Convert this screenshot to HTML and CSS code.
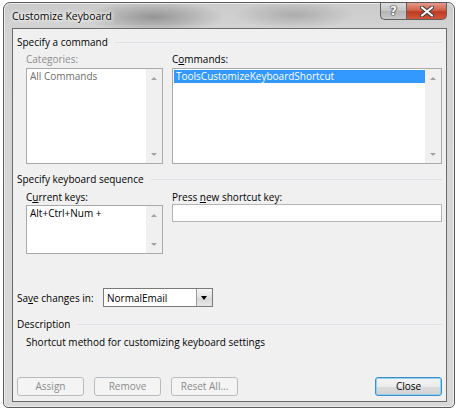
FILE: index.html
```html
<!DOCTYPE html>
<html>
<head>
<meta charset="utf-8">
<link rel="stylesheet" href="styles.css">
</head>
<body>
<div class="window">
  <div class="titlebar">
    <span class="title">Customize Keyboard</span>
    <div class="caption help"><span>?</span></div>
    <div class="caption close">
      <svg width="14" height="11" viewBox="0 0 14 11"><path d="M2 1.5 L12 9.5 M12 1.5 L2 9.5" stroke="#3a3a3a" stroke-width="4" stroke-linecap="round"/><path d="M2 1.5 L12 9.5 M12 1.5 L2 9.5" stroke="#fff" stroke-width="2.2" stroke-linecap="round"/></svg>
    </div>
  </div>
  <div class="client">
    <div class="group g1"><span>Specify a command</span><i></i></div>
    <div class="cols">
      <div class="col left">
        <div class="label disabled">Categories:</div>
        <div class="listbox tall">
          <div class="items"><div class="item dim">All Commands</div></div>
          <div class="sb"><b class="up"></b><b class="down"></b></div>
        </div>
      </div>
      <div class="col right">
        <div class="label">C<u>o</u>mmands:</div>
        <div class="listbox tall">
          <div class="items"><div class="item sel">ToolsCustomizeKeyboardShortcut</div></div>
          <div class="sb"><b class="up"></b><b class="down"></b></div>
        </div>
      </div>
    </div>
    <div class="group g2"><span>Specify keyboard sequence</span><i></i></div>
    <div class="cols">
      <div class="col left">
        <div class="label lab2">C<u>u</u>rrent keys:</div>
        <div class="listbox short">
          <div class="items"><div class="item">Alt+Ctrl+Num +</div></div>
          <div class="sb"><b class="up"></b><b class="down"></b></div>
        </div>
      </div>
      <div class="col right">
        <div class="label lab2">Press <u>n</u>ew shortcut key:</div>
        <div class="input"></div>
      </div>
    </div>
    <div class="saverow">
      <span class="savelabel">Sa<u>v</u>e changes in:</span>
      <div class="combo"><span>NormalEmail</span><div class="drop"><b></b></div></div>
    </div>
    <div class="group g3"><span>Description</span><i></i></div>
    <div class="desc">Shortcut method for customizing keyboard settings</div>
    <div class="buttons">
      <div class="btn off">Assign</div>
      <div class="btn off">Remove</div>
      <div class="btn off">Reset All...</div>
      <div class="spacer"></div>
      <div class="btn def">Close</div>
    </div>
  </div>
</div>
</body>
</html>
```
FILE: styles.css
```css
* { box-sizing: border-box; }
html, body { margin: 0; padding: 0; background: #ffffff; }
body { font-family: "Open Sans", "Noto Sans", sans-serif; font-size: 10px; font-weight: 500; color: #000; width: 458px; height: 414px; overflow: hidden; }

.window {
  margin: 2px 0 0 3px;
  width: 452px;
  height: 406px;
  border: 1px solid #5c5c5c;
  border-radius: 7px 7px 5px 5px;
  padding: 0 7px 5px 8px;
  background:
    radial-gradient(ellipse 70px 16px at 150px 14px, rgba(110,110,110,0.6), rgba(110,110,110,0) 100%),
    radial-gradient(ellipse 60px 14px at 290px 12px, rgba(130,130,130,0.45), rgba(130,130,130,0) 100%),
    linear-gradient(#cbcbcb, #d4d4d4 30px, #d9d9d9);
  box-shadow: inset 0 0 0 1px #ececec;
  display: flex;
  flex-direction: column;
}

.titlebar { height: 25px; display: flex; align-items: flex-start; }
.title {
  margin-right: auto;
  margin-top: 5px;
  font-size: 10.4px;
  color: #000;
  text-shadow: 0 0 6px #fff, 0 0 4px #fff, 0 0 2px #fff;
  line-height: 16px;
}
.caption {
  height: 17px;
  display: flex;
  align-items: center;
  justify-content: center;
  border: 1px solid #5f5f5f;
  border-top: none;
}
.help {
  width: 26px;
  border-radius: 0 0 0 5px;
  border-right: none;
  background: linear-gradient(#dcdcdc, #c4c4c4 50%, #b4b4b4 51%, #c8c8c8);
}
.help span {
  font-family: "DejaVu Sans", sans-serif;
  font-weight: bold;
  font-size: 12px;
  color: #fff;
  line-height: 12px;
  text-shadow: 0 0 1px #333, 0 0 1px #333, 0 0 2px #333;
}
.close {
  width: 41px;
  border-radius: 0 0 5px 0;
  background: linear-gradient(#e49a8b, #d1624c 45%, #bf3b21 55%, #d0573d);
}

.client {
  width: 435px;
  height: 374px;
  border: 1px solid #6b6b6b;
  background: #f0f0f0;
  padding: 0 4px 0 4px;
  display: flex;
  flex-direction: column;
}

.group { display: flex; align-items: center; height: 14px; line-height: 14px; color: #000; }
.group span { white-space: nowrap; }
.group i { flex: 1; height: 1px; background: #dbe1e6; margin-left: 7px; }
.g1 { margin-top: 6px; }
.g2 { margin-top: 8px; }
.g3 { margin-top: 10px; }

.cols { display: flex; padding-left: 9px; gap: 9px; }
.col { display: flex; flex-direction: column; }
.col.left { width: 137px; }
.col.right { width: 270px; }
.label { height: 14px; line-height: 14px; margin-top: 3px; margin-bottom: 2px; white-space: nowrap; }
.label.disabled { color: #8d8d8d; }
.label.lab2 { margin-top: 4px; margin-bottom: 0; }

.listbox { border: 1px solid #a9a9a9; background: #fff; display: flex; }
.listbox.tall { height: 96px; }
.listbox.short { height: 49px; margin-top: 1px; }
.items { flex: 1; padding: 1px 0 0 1px; }
.item { height: 13px; line-height: 13px; padding-left: 2px; white-space: nowrap; }
.item.dim { color: #6d6d6d; }
.item.sel { background: #3399ff; color: #fff; }
.sb { width: 16px; background: #f0f0f0; position: relative; }
.sb b { position: absolute; left: 5px; width: 0; height: 0; border-left: 3px solid transparent; border-right: 3px solid transparent; }
.sb .up { top: 8px; border-bottom: 3px solid #a3a3a3; }
.sb .down { bottom: 7px; border-top: 3px solid #a3a3a3; }

.input { height: 18px; border: 1px solid #b5b5b5; background: #fff; }

.saverow { display: flex; align-items: center; margin-top: 34px; height: 19px; }
.savelabel { width: 86px; white-space: nowrap; }
.combo { width: 110px; height: 19px; border: 1px solid #7a7a7a; background: #fff; display: flex; align-items: center; padding-left: 3px; }
.combo span { flex: 1; }
.drop { width: 16px; height: 17px; border-left: 1px solid #9a9a9a; background: linear-gradient(#f4f4f4, #e3e3e3 50%, #d6d6d6 51%, #e6e6e6); position: relative; margin-right: 0; }
.drop b { position: absolute; left: 4px; top: 7px; width: 0; height: 0; border-left: 3.5px solid transparent; border-right: 3.5px solid transparent; border-top: 4px solid #000; }

.desc { margin-top: 4px; padding-left: 9px; height: 14px; line-height: 14px; }

.buttons { display: flex; gap: 10px; margin-top: 28px; }
.spacer { flex: 1; }
.btn { width: 67px; height: 19px; line-height: 17px; text-align: center; border-radius: 3px; }
.btn.off { border: 1px solid #b7bcbf; background: #f4f4f4; color: #8b8b8b; }
.btn.def {
  border: 1px solid #3c8fc8;
  box-shadow: inset 0 0 0 1px #8fd0ef;
  background: linear-gradient(#f4f4f4, #ececec 50%, #dcdcdc 51%, #d2d2d2);
  color: #000;
}
```
